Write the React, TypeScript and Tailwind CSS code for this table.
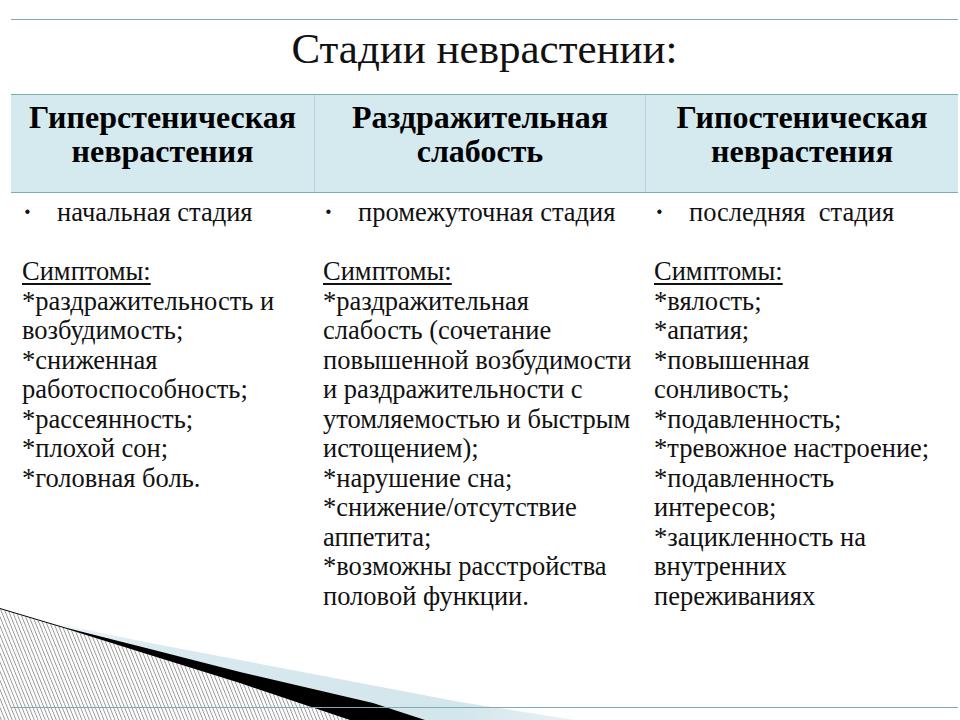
import React from "react";

const columns = [
    {
        title: ["Гиперстеническая", "неврастения"],
        stage: "начальная стадия",
        lines: [
            "*раздражительность и",
            "возбудимость;",
            "*сниженная",
            "работоспособность;",
            "*рассеянность;",
            "*плохой сон;",
            "*головная боль.",
        ],
    },
    {
        title: ["Раздражительная", "слабость"],
        stage: "промежуточная стадия",
        lines: [
            "*раздражительная",
            "слабость (сочетание",
            "повышенной возбудимости",
            "и раздражительности с",
            "утомляемостью и быстрым",
            "истощением);",
            "*нарушение сна;",
            "*снижение/отсутствие",
            "аппетита;",
            "*возможны расстройства",
            "половой функции.",
        ],
    },
    {
        title: ["Гипостеническая", "неврастения"],
        stage: "последняя\u00a0 стадия",
        lines: [
            "*вялость;",
            "*апатия;",
            "*повышенная",
            "сонливость;",
            "*подавленность;",
            "*тревожное настроение;",
            "*подавленность",
            "интересов;",
            "*зацикленность на",
            "внутренних",
            "переживаниях",
        ],
    },
];

function CornerDecor() {
    return (
        <svg className="absolute left-0 top-[600px] pointer-events-none" width="600" height="120" viewBox="0 0 600 120">
            <defs>
                <linearGradient id="glow" x1="0" y1="0" x2="1" y2="0">
                    <stop offset="0" stopColor="#ffffff"/>
                    <stop offset="0.25" stopColor="#d9eaf0"/>
                    <stop offset="0.8" stopColor="#d3e6ec"/>
                    <stop offset="1" stopColor="#e8f2f5"/>
                </linearGradient>
                <pattern id="hatch" patternUnits="userSpaceOnUse" width="3.4" height="10" patternTransform="rotate(-22)">
                    <rect width="3.4" height="10" fill="#ffffff"/>
                    <line x1="0.5" y1="0" x2="0.5" y2="10" stroke="#7d7d7d" strokeWidth="0.8"/>
                </pattern>
            </defs>
            <path d="M0,12 L150,43 L240,60 L460,102 L575,120 L0,120 Z" fill="url(#glow)"/>
            <path d="M0,9 L67,29 L150,55 L240,83 L350,120 L0,120 Z" fill="url(#hatch)"/>
            <path d="M0,8 L67,28 L150,49 L240,72 L373,103 L425,120 L350,120 L240,83 L150,55 L67,29 L0,9 Z" fill="#000"/>
        </svg>
    );
}

export default function App() {
    return (
        <div className="relative w-[960px] h-[720px] bg-white overflow-hidden font-['Liberation_Serif',serif] text-[#111]">
            <CornerDecor/>
            <div className="relative ml-[11px] w-[947px] mt-[19px] h-[689px] border-y border-[#7eabb4] flex flex-col">
                <div className="h-[74px] pt-[7px] text-center text-[43px] leading-none whitespace-nowrap">
                    Стадии неврастении:
                </div>
                <div className="grid grid-cols-[303px_331px_313px] h-[99px] border-y border-[#7eabb4] bg-[#d5eaef]">
                    {columns.map((col, i) => (
                        <div key={i} className={"pt-[5px] text-center font-bold text-[32px] leading-[34px] text-black whitespace-nowrap " + (i > 0 ? "border-l border-[#b3d4dc]" : "")}>
                            {col.title.map((t) => <div key={t}>{t}</div>)}
                        </div>
                    ))}
                </div>
                <div className="grid grid-cols-[303px_331px_313px] flex-1">
                    {columns.map((col, i) => (
                        <div key={i} className={"pt-[5px] text-[26.5px] leading-[29.5px] whitespace-nowrap " + (i === 0 ? "pl-[11px]" : "pl-[9px]")}>
                            <div className="flex">
                                <span className="w-[35px] pl-[1px] font-bold">·</span>
                                <span>{col.stage}</span>
                            </div>
                            <div>&nbsp;</div>
                            <div><span className="underline decoration-[1.5px] underline-offset-[3px]">Симптомы:</span></div>
                            {col.lines.map((l, j) => <div key={j}>{l}</div>)}
                        </div>
                    ))}
                </div>
            </div>
        </div>
    );
}
